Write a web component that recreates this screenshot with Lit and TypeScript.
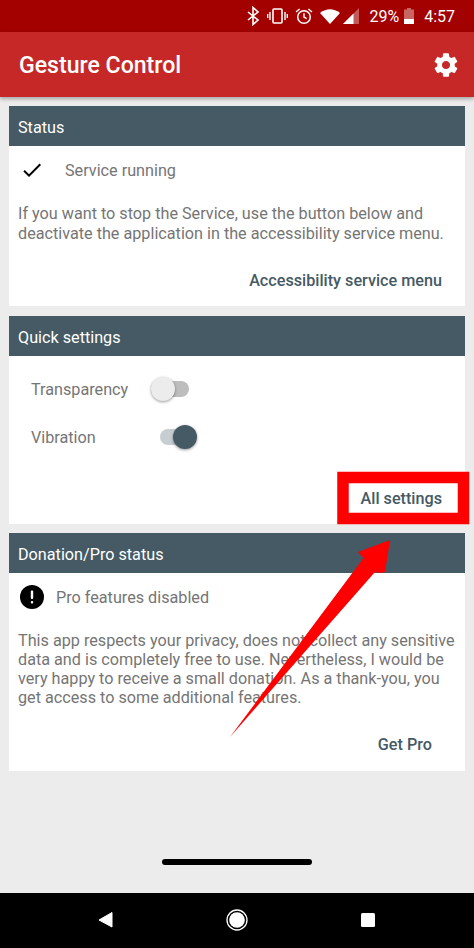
import { LitElement, html, css, svg } from "lit";
import { customElement } from "lit/decorators.js";

@customElement("app-root")
export class AppRoot extends LitElement {
  static styles = css`
    :host { display: block; width: 474px; height: 948px; position: relative; overflow: hidden; font-family: Roboto, "Liberation Sans", sans-serif; background: #ececec; }
    .page { display: flex; flex-direction: column; height: 948px; }
    .status { height: 32px; background: #a30000; color: #fff; display: flex; align-items: center; justify-content: flex-end; padding-right: 19px; box-sizing: border-box; }
    .status svg { display: block; flex: none; }
    .pct { font-size: 16px; margin-left: 10px; }
    .time { font-size: 16px; margin-left: 10px; }
    .bat { margin-left: 5px; }
    .icons { display: flex; align-items: center; gap: 7px; }
    .signal { margin-left: -4px; }
    .appbar { height: 65px; background: #c62828; color: #fff; display: flex; align-items: center; justify-content: space-between; padding: 0 14px 0 19px; box-shadow: 0 2px 4px rgba(0,0,0,.3); position: relative; }
    .title { font-size: 23.1px; font-weight: 500; padding-top: 2px; }
    .content { flex: 1; padding: 9px 9px 0; display: flex; flex-direction: column; }
    .card { background: #fff; margin-bottom: 10px; }
    .card.q { margin-bottom: 9px; }
    .head { height: 38px; padding: 2px 0 0 9px; background: #455a64; color: #fff; font-size: 16.2px; display: flex; align-items: center; }
    .s-body { height: 160px; display: flex; flex-direction: column; }
    .q-body { height: 168px; display: flex; flex-direction: column; }
    .d-body { height: 198px; display: flex; flex-direction: column; }
    .iconrow { display: flex; align-items: center; color: #757575; font-size: 16.2px; }
    .iconrow svg { flex: none; }
    .r1 { height: 48px; padding-left: 11px; gap: 21px; }
    .r2 { height: 48px; padding-left: 10px; gap: 11px; }
    p { margin: 0; color: #757575; font-size: 16.2px; padding: 0 9px; white-space: nowrap; }
    .p1 { line-height: 20px; margin-top: 10px; }
    .p2 { line-height: 19px; margin-top: 10px; }
    .btn { color: #455a64; font-weight: 500; font-size: 16.2px; display: flex; justify-content: flex-end; }
    .b1 { padding: 27px 23px 0 0; }
    .b2 { padding: 0 23px 16px 0; }
    .b3 { padding: 28px 33px 0 0; }
    .toggle-row { display: flex; align-items: center; height: 48px; padding-left: 22px; color: #757575; font-size: 16.2px; }
    .toggle-row .lbl { width: 120px; }
    .sw { position: relative; height: 16px; border-radius: 8px; }
    .sw i { position: absolute; top: -4px; width: 24px; height: 24px; border-radius: 50%; box-shadow: 0 1px 3px rgba(0,0,0,.4); }
    .sw.off { background: #bdbdbd; width: 38px; }
    .sw.off i { left: 0; background: #ececec; }
    .sw.on { background: #c7ced1; margin-left: 9px; width: 36px; }
    .sw.on i { right: -1px; background: #455a64; }
    .tog { padding-top: 9px; }
    .spacer { flex: 1; }
    .handle-wrap { height: 34px; flex: none; }
    .handle { width: 150px; height: 6px; border-radius: 3px; background: #000; margin: 0 auto; }
    .nav { height: 55px; flex: none; background: #000; }
    .nav svg { display: block; }
    .mark { position: absolute; left: 0; top: 0; pointer-events: none; }
  `;

  private statusIcons() {
    return html`<div class="icons">
      <svg width="14" height="20" viewBox="0 0 14 20"><path fill="none" stroke="#fff" stroke-width="1.6" d="M2 6l10 8-5 4.500V1.500L12 6 2 14"/></svg>
      <svg width="21" height="18" viewBox="0 0 21 18"><rect x="6" y="2" width="9" height="14" rx="1" fill="none" stroke="#fff" stroke-width="1.6"/><path fill="none" stroke="#fff" stroke-width="1.4" d="M3 5v8M.7 7v4M18 5v8M20.300 7v4"/></svg>
      <svg width="18" height="18" viewBox="0 0 18 18"><circle cx="9" cy="10" r="6.300" fill="none" stroke="#fff" stroke-width="1.500"/><path fill="none" stroke="#fff" stroke-width="1.400" d="M9 6.300V10l2.600 1.700M1 5l3.600-3M17 5l-3.600-3"/></svg>
      <svg width="20" height="15" viewBox="0 0 20 15"><path fill="#fff" d="M0 4Q10-3.500 20 4L10 15z"/></svg>
      <svg class="signal" width="16" height="16" viewBox="0 0 16 16"><path fill="#fff" fill-opacity=".35" d="M16 0v16H0z"/><path fill="#fff" d="M10.500 5.500V16H0z"/></svg>
    </div>`;
  }

  render() {
    return html`
      <div class="page">
        <div class="status">
          ${this.statusIcons()}
          <span class="pct">29%</span>
          <svg class="bat" width="10" height="16" viewBox="0 0 10 16"><path fill="#fff" fill-opacity=".4" d="M3 0h4v1.500h3V16H0V1.500h3z"/><path fill="#fff" d="M0 11h10v5H0z"/></svg>
          <span class="time">4:57</span>
        </div>
        <div class="appbar">
          <span class="title">Gesture Control</span>
          <svg width="28" height="28" viewBox="0 0 24 24"><path fill="#fff" d="M19.430 12.980c.04-.32.07-.64.07-.98s-.03-.66-.07-.98l2.110-1.650c.19-.15.24-.42.12-.64l-2-3.460c-.12-.22-.39-.3-.61-.22l-2.490 1c-.52-.4-1.080-.73-1.690-.98l-.38-2.650A.488.488 0 0 0 14 2h-4c-.25 0-.46.18-.49.42l-.38 2.650c-.61.25-1.170.59-1.690.98l-2.490-1c-.23-.09-.49 0-.61.22l-2 3.460c-.13.22-.07.49.12.64l2.110 1.650c-.04.32-.07.65-.07.98s.03.66.07.98l-2.110 1.650c-.19.15-.24.42-.12.64l2 3.460c.12.22.39.3.61.22l2.490-1c.52.4 1.080.73 1.690.98l.38 2.650c.03.24.24.42.49.42h4c.25 0 .46-.18.49-.42l.38-2.650c.61-.25 1.170-.59 1.690-.98l2.490 1c.23.09.49 0 .61-.22l2-3.460c.12-.22.07-.49-.12-.64l-2.110-1.650zM12 15.500c-1.930 0-3.500-1.570-3.500-3.500s1.570-3.500 3.500-3.500 3.500 1.570 3.500 3.500-1.570 3.500-3.500 3.500z"/></svg>
        </div>
        <div class="content">
          <section class="card">
            <div class="head">Status</div>
            <div class="s-body">
              <div class="iconrow r1">
                <svg width="24" height="24" viewBox="0 0 24 24"><path fill="#000" d="M9 16.200 4.800 12l-1.400 1.400L9 19 21 7l-1.400-1.400z"/></svg>
                <span>Service running</span>
              </div>
              <p class="p1">If you want to stop the Service, use the button below and<br />deactivate the application in the accessibility service menu.</p>
              <div class="btn b1">Accessibility service menu</div>
            </div>
          </section>
          <section class="card q">
            <div class="head">Quick settings</div>
            <div class="q-body">
              <div class="tog">
                <div class="toggle-row"><span class="lbl">Transparency</span><div class="sw off"><i></i></div></div>
                <div class="toggle-row"><span class="lbl">Vibration</span><div class="sw on"><i></i></div></div>
              </div>
              <div class="spacer"></div>
              <div class="btn b2">All settings</div>
            </div>
          </section>
          <section class="card">
            <div class="head">Donation/Pro status</div>
            <div class="d-body">
              <div class="iconrow r2">
                <svg width="26" height="26" viewBox="0 0 26 26"><circle cx="13" cy="13" r="12" fill="#000"/><rect x="11.800" y="6.500" width="2.400" height="8.500" rx="1" fill="#fff"/><rect x="11.800" y="17" width="2.400" height="2.400" rx="1" fill="#fff"/></svg>
                <span>Pro features disabled</span>
              </div>
              <p class="p2">This app respects your privacy, does not collect any sensitive<br />data and is completely free to use. Nevertheless, I would be<br />very happy to receive a small donation. As a thank-you, you<br />get access to some additional features.</p>
              <div class="btn b3">Get Pro</div>
            </div>
          </section>
          <div class="spacer"></div>
          <div class="handle-wrap"><div class="handle"></div></div>
        </div>
        <div class="nav">
          <svg width="474" height="55" viewBox="0 0 474 55">
            <path fill="#fff" d="M99 27l13-7.500v14.500z" stroke="#fff" stroke-width="1" stroke-linejoin="round"/>
            <circle cx="237" cy="27" r="7.800" fill="#fff"/>
            <circle cx="237" cy="27" r="10" fill="none" stroke="#fff" stroke-width="1.300"/>
            <rect x="361" y="20" width="14" height="14" rx="1.500" fill="#fff"/>
          </svg>
        </div>
      </div>
      <svg class="mark" width="474" height="948" viewBox="0 0 474 948">
        ${svg`<path fill="none" stroke="#fe0000" stroke-width="11.500" d="M343 477.500H463.500V518.500H343z"/>
        <path fill="#fe0000" d="M390 540 358 552 363.500 558 230 737 375 572 381 573 385 572z"/>`}
      </svg>
    `;
  }
}
